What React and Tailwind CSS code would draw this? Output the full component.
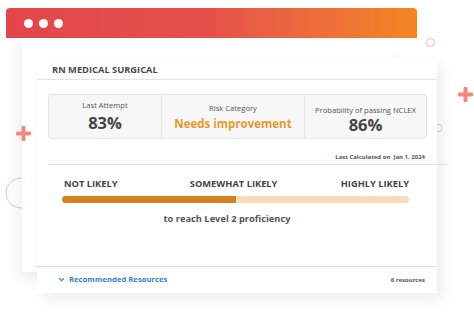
import React from 'react';

const font = { fontFamily: '"Open Sans", "Liberation Sans", sans-serif' };

const Plus = ({ className }) => (
  <svg className={className} width="15" height="15" viewBox="0 0 15 15">
    <rect x="5.5" y="0" width="4" height="15" rx="1" fill="#ee8a82" />
    <rect x="0" y="5.5" width="15" height="4" rx="1" fill="#ee8a82" />
  </svg>
);

const Stat = ({ label, value, valueClass, boxClass }) => (
  <div className={`flex flex-col items-center ${boxClass}`}>
    <div className="text-[7.6px] leading-[10px] text-[#555]">{label}</div>
    <div className={`font-bold ${valueClass}`}>{value}</div>
  </div>
);

export default function App() {
  return (
    <div className="relative w-[474px] h-[319px] overflow-hidden bg-white" style={font}>
      {/* decorations behind the cards */}
      <svg className="absolute left-[433px] top-[122px]" width="12" height="12" viewBox="0 0 12 12">
        <circle cx="5" cy="6" r="4" fill="none" stroke="#f3c4bd" strokeWidth="1" />
      </svg>
      <svg className="absolute left-[2px] top-[175px]" width="40" height="36" viewBox="0 0 40 36">
        <circle cx="19" cy="18" r="15" fill="none" stroke="#f0c3bc" strokeWidth="1" />
      </svg>

      {/* header bar */}
      <div className="absolute left-[6px] top-[8px] w-[411px] h-[30px] rounded-t-[4px] bg-linear-to-r from-[#e3454b] via-[#e5514a] via-50% to-[#f4851f] flex items-center gap-[6px] pl-[18px] z-10">
        <span className="w-[9px] h-[9px] rounded-full bg-white" />
        <span className="w-[9px] h-[9px] rounded-full bg-white" />
        <span className="w-[9px] h-[9px] rounded-full bg-white" />
      </div>

      {/* back window */}
      <div className="absolute left-[22px] top-[38px] w-[373px] h-[234px] bg-white shadow-[-4px_6px_14px_rgba(0,0,0,0.07)]" />

      {/* front card */}
      <div className="absolute left-[37px] top-[58px] w-[400px] h-[235px] bg-white shadow-[6px_6px_14px_rgba(0,0,0,0.07)] flex flex-col">
        <div className="h-[22px] flex items-center pl-[15px] pt-[2px] border-b border-[#e4e4e4] text-[9.3px] font-bold text-[#4a4a4a]">
          RN MEDICAL SURGICAL
        </div>

        <div className="mt-[14px] ml-[11px] mr-[10px] h-[45px] grid grid-cols-[112px_143px_1fr] rounded-[4px] border border-[#e3e3e3] bg-[#f7f7f7]">
          <Stat label="Last Attempt" value="83%" boxClass="pt-[5px]" valueClass="mt-[3px] text-[16.5px] leading-[20px] text-[#444]" />
          <div className="border-l border-[#e6e6e6]">
            <Stat label="Risk Category" value="Needs improvement" boxClass="pt-[8px]" valueClass="mt-[3px] text-[11.5px] leading-[16px] text-[#e89a2d]" />
          </div>
          <div className="border-l border-[#e6e6e6]">
            <Stat label="Probability of passing NCLEX" value="86%" boxClass="pt-[10px]" valueClass="text-[16.5px] leading-[20px] text-[#444]" />
          </div>
        </div>

        <div className="mt-[14px] pr-[12px] text-right text-[6px] leading-[8px] font-bold text-[#555]">
          Last Calculated on&nbsp; Jan 1, 2024
        </div>
        <div className="mt-[3px] ml-[11px] -mr-[10px] h-px bg-[#e2e2e2]" />

        <div className="mt-[13px] ml-[27px] w-[345px] flex justify-between text-[9.3px] leading-[12px] font-bold text-[#444]">
          <span>NOT LIKELY</span>
          <span className="ml-[9px]">SOMEWHAT LIKELY</span>
          <span>HIGHLY LIKELY</span>
        </div>
        <div className="mt-[6px] ml-[25px] w-[347px] h-[7px] rounded-full bg-[#f6dcba] overflow-hidden">
          <div className="h-full w-[174px] bg-[#d6811f]" />
        </div>
        <div className="mt-[10px] ml-[25px] w-[347px] pr-[17px] text-center text-[9.3px] leading-[12px] font-bold text-[#555]">
          to reach Level 2 proficiency
        </div>

        <div className="mt-auto -ml-[2px] h-[27px] flex items-center justify-between border-t border-[#e2e2e2] pl-[23px] pr-[12px]">
          <div className="flex items-center gap-[4px] text-[7.7px] font-bold text-[#3582c4]">
            <svg width="7" height="5" viewBox="0 0 7 5">
              <path d="M1 1.2 L3.5 3.6 L6 1.2" fill="none" stroke="#3582c4" strokeWidth="1.2" />
            </svg>
            <span>Recommended Resources</span>
          </div>
          <span className="text-[6px] font-bold text-[#555]">6 resources</span>
        </div>
      </div>

      {/* decorations in front */}
      <svg className="absolute left-[425px] top-[37px]" width="11" height="11" viewBox="0 0 11 11">
        <circle cx="5.5" cy="5.5" r="4" fill="none" stroke="#f2b5ae" strokeWidth="1" />
      </svg>
      <Plus className="absolute left-[458px] top-[87px]" />
      <Plus className="absolute left-[16px] top-[126px]" />
    </div>
  );
}
